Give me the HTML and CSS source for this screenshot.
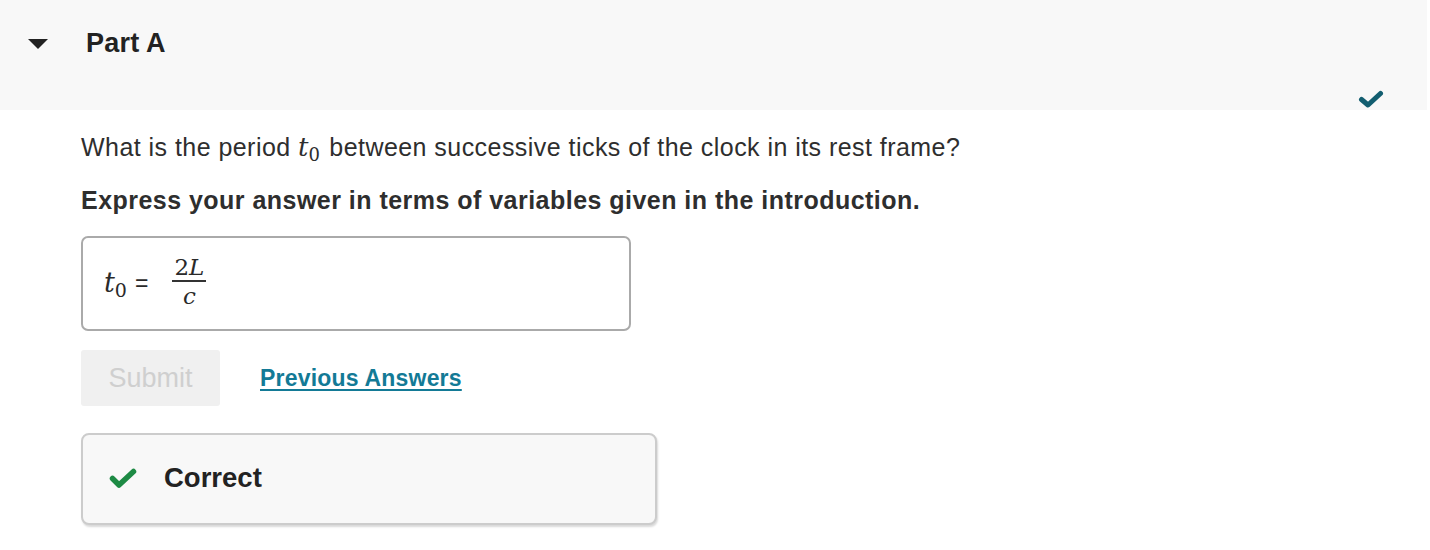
FILE: index.html
```html
<!DOCTYPE html>
<html>
<head>
<meta charset="utf-8">
<link rel="stylesheet" href="styles.css">
</head>
<body>
<div class="part">
  <div class="part-header">
    <span class="caret"></span>
    <h2 class="part-title">Part A</h2>
    <svg class="status-check" width="26" height="18" viewBox="0 0 26 18"><path d="M3.5 9.5 L10 15 L22.5 3.5" fill="none" stroke="#135e70" stroke-width="5" stroke-linecap="round" stroke-linejoin="round"/></svg>
  </div>
  <div class="part-body">
    <p class="question">What is the period <span class="mvar">t</span><span class="msub">0</span> between successive ticks of the clock in its rest frame?</p>
    <p class="instruction">Express your answer in terms of variables given in the introduction.</p>
    <div class="answer-box">
      <span class="lhs"><span class="mvar">t</span><span class="msub">0</span></span>
      <span class="eq">=</span>
      <span class="frac">
        <span class="num">2<span class="mvar">L</span></span>
        <span class="den"><span class="mvar">c</span></span>
      </span>
    </div>
    <div class="actions">
      <button class="submit" disabled>Submit</button>
      <a class="prev" href="#">Previous Answers</a>
    </div>
    <div class="feedback">
      <svg class="ok" width="30" height="22" viewBox="0 0 30 22"><path d="M4.5 11.5 L11 18 L25.5 4.5" fill="none" stroke="#1d8a44" stroke-width="5.5" stroke-linecap="round" stroke-linejoin="round"/></svg>
      <span class="feedback-text">Correct</span>
    </div>
  </div>
</div>
</body>
</html>
```

FILE: styles.css
```css
* { box-sizing: border-box; }
html, body { margin: 0; padding: 0; background: #fff; }
body {
  font-family: "Liberation Sans", Arial, sans-serif;
  color: #2a2a2a;
  width: 1430px;
  height: 550px;
  overflow: hidden;
}
.part-header {
  position: relative;
  height: 110px;
  width: 1427px;
  background: #f8f8f8;
  display: flex;
  align-items: flex-start;
  padding-top: 26px;
}
.caret {
  width: 0; height: 0;
  margin-left: 28px;
  margin-top: 13px;
  border-left: 10px solid transparent;
  border-right: 10px solid transparent;
  border-top: 10px solid #222;
}
.part-title {
  margin: 0 0 0 38px;
  font-size: 27px;
  letter-spacing: 0.2px;
  font-weight: bold;
  color: #222;
  line-height: 34px;
}
.status-check {
  position: absolute;
  right: 43px;
  bottom: 2px;
}
.part-body {
  padding: 20px 0 0 81px;
}
.question {
  margin: 0;
  font-size: 25px;
  letter-spacing: 0.45px;
  line-height: 34px;
  color: #2e2e2e;
}
.mvar {
  font-family: "DejaVu Serif", "Liberation Serif", serif;
  font-style: italic;
  letter-spacing: 0;
}
.question .mvar { font-size: 26px; }
.msub {
  font-family: "DejaVu Serif", "Liberation Serif", serif;
  font-size: 18px;
  position: relative;
  top: 5px;
  margin-right: 2px;
  letter-spacing: 0;
}
.instruction {
  margin: 17px 0 0 0;
  font-size: 25px;
  letter-spacing: 0.47px;
  font-weight: bold;
  line-height: 32px;
  color: #2e2e2e;
}
.answer-box {
  margin-top: 20px;
  width: 550px;
  height: 95px;
  border: 2px solid #aaa;
  border-radius: 7px;
  display: flex;
  align-items: center;
  padding-left: 21px;
  padding-bottom: 2px;
}
.lhs { font-size: 27px; }
.lhs .msub { font-size: 19px; top: 5px; }
.eq {
  font-size: 23px;
  margin-left: 6px;
  margin-right: 24px;
  position: relative;
  top: 1px;
}
.frac {
  display: inline-flex;
  flex-direction: column;
  align-items: center;
  font-family: "DejaVu Serif", "Liberation Serif", serif;
  font-size: 23px;
  position: relative;
  top: -1px;
}
.num {
  padding: 0 2px 0;
  border-bottom: 2px solid #333;
  line-height: 26px;
}
.den { line-height: 28px; }
.actions {
  margin-top: 19px;
  display: flex;
  align-items: center;
}
.submit {
  width: 139px;
  height: 56px;
  background: #f0f0f0;
  border: none;
  border-radius: 3px;
  color: #cfcfcf;
  font-family: "Liberation Sans", Arial, sans-serif;
  font-size: 27px;
  padding: 0;
}
.prev {
  margin-left: 40px;
  color: #137a96;
  font-size: 23px;
  letter-spacing: 0.2px;
  font-weight: bold;
  text-decoration: underline;
  text-underline-offset: 3px;
  position: relative;
  top: 0px;
}
.feedback {
  margin-top: 27px;
  width: 576px;
  height: 92px;
  background: #f8f8f8;
  border: 2px solid #ccc;
  border-radius: 8px;
  box-shadow: 1px 2px 2px rgba(0,0,0,0.15);
  display: flex;
  align-items: center;
  padding-left: 25px;
  padding-bottom: 2px;
}
.feedback-text {
  margin-left: 26px;
  font-size: 27.5px;
  font-weight: bold;
  color: #222;
}
```
